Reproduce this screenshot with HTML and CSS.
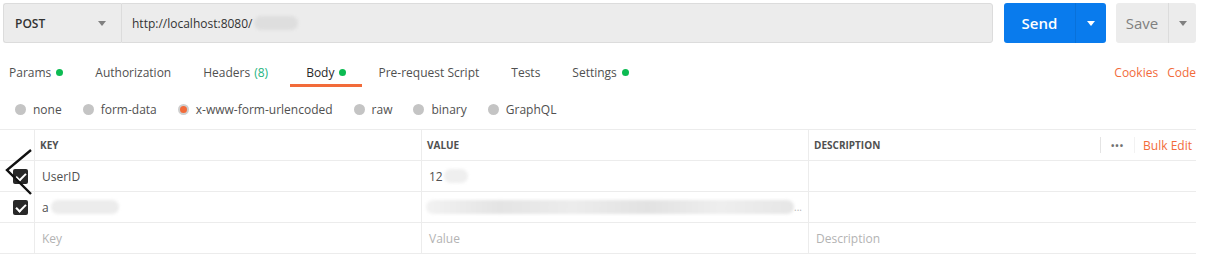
FILE: index.html
```html
<!DOCTYPE html>
<html lang="en">
<head>
    <meta charset="UTF-8">
    <title>Request - Body</title>
    <link rel="stylesheet" href="styles.css">
</head>
<body>
    <div class="page">
        <!-- request url bar -->
        <div class="url-bar">
            <div class="method">
                <span>POST</span>
                <span class="caret"></span>
            </div>
            <div class="url-input">
                <span>http://localhost:8080/</span><span class="smudge smudge-url"></span>
            </div>
            <div class="btn-send">
                <span class="btn-label">Send</span>
                <span class="btn-drop"><span class="caret caret-white"></span></span>
            </div>
            <div class="btn-save">
                <span class="btn-label">Save</span>
                <span class="btn-drop"><span class="caret"></span></span>
            </div>
        </div>

        <!-- tabs -->
        <div class="tabs">
            <div class="tab-list">
                <span class="tab">Params <i class="dot"></i></span>
                <span class="tab">Authorization</span>
                <span class="tab tab-headers">Headers <em>(8)</em></span>
                <span class="tab active">Body <i class="dot"></i></span>
                <span class="tab">Pre-request Script</span>
                <span class="tab">Tests</span>
                <span class="tab">Settings <i class="dot"></i></span>
            </div>
            <div class="tab-links">
                <span>Cookies</span>
                <span>Code</span>
            </div>
        </div>

        <!-- body type -->
        <div class="body-types">
            <label class="radio"><i></i>none</label>
            <label class="radio"><i></i>form-data</label>
            <label class="radio checked"><i></i>x-www-form-urlencoded</label>
            <label class="radio"><i></i>raw</label>
            <label class="radio"><i></i>binary</label>
            <label class="radio"><i></i>GraphQL</label>
        </div>

        <!-- key / value table -->
        <div class="kv-table">
            <div class="kv-row kv-head">
                <div class="cell cell-check"></div>
                <div class="cell">KEY</div>
                <div class="cell">VALUE</div>
                <div class="cell cell-desc">
                    <span>DESCRIPTION</span>
                    <span class="head-tools">
                        <span class="more">&bull;&bull;&bull;</span>
                        <span class="bulk">Bulk Edit</span>
                    </span>
                </div>
            </div>
            <div class="kv-row">
                <div class="cell cell-check"><span class="checkbox"></span></div>
                <div class="cell">UserID</div>
                <div class="cell">12<span class="smudge smudge-short"></span></div>
                <div class="cell"></div>
            </div>
            <div class="kv-row">
                <div class="cell cell-check"><span class="checkbox"></span></div>
                <div class="cell">a<span class="smudge smudge-key"></span></div>
                <div class="cell"><span class="smudge smudge-long"></span><span class="ellipsis">...</span></div>
                <div class="cell"></div>
            </div>
            <div class="kv-row">
                <div class="cell cell-check"></div>
                <div class="cell placeholder">Key</div>
                <div class="cell placeholder">Value</div>
                <div class="cell placeholder">Description</div>
            </div>
        </div>

        <!-- hand drawn mark over the first checkbox -->
        <svg class="scribble" width="32" height="50" viewBox="0 0 32 50">
            <path d="M27 2 L3 22 L27 46" fill="none" stroke="#111" stroke-width="2.4"/>
        </svg>
    </div>
</body>
</html>
```

FILE: styles.css
```css
body {
    margin: 0;
    font-family: 'Open Sans', 'Liberation Sans', Arial, sans-serif;
    font-size: 12px;
    color: #505050;
    background: #fff;
}
.page {
    position: relative;
    width: 1215px;
    height: 264px;
    overflow: hidden;
}

/* url bar */
.url-bar {
    display: flex;
    padding: 3px 0 0 3px;
    height: 40px;
}
.method {
    width: 118px;
    box-sizing: border-box;
    display: flex;
    align-items: center;
    justify-content: space-between;
    padding: 0 15px 0 11px;
    background: #ececec;
    border: 1px solid #dcdcdc;
    border-right: none;
    border-radius: 3px 0 0 3px;
    color: #333;
    font-weight: 600;
}
.caret {
    width: 0;
    height: 0;
    border-left: 4px solid transparent;
    border-right: 4px solid transparent;
    border-top: 5px solid #808080;
}
.caret-white {
    border-top-color: #fff;
}
.url-input {
    width: 872px;
    box-sizing: border-box;
    display: flex;
    align-items: center;
    padding-left: 10px;
    background: #ececec;
    border: 1px solid #dcdcdc;
    border-radius: 0 3px 3px 0;
    color: #333;
}
.btn-send, .btn-save {
    display: flex;
    border-radius: 3px;
    font-size: 15px;
    font-weight: 600;
}
.btn-send {
    margin-left: 11px;
    width: 102px;
    background: #097bed;
    color: #fff;
}
.btn-save {
    margin-left: 10px;
    width: 80px;
    background: #ececec;
    color: #808080;
    font-weight: 400;
}
.btn-label {
    flex: 1;
    display: flex;
    align-items: center;
    justify-content: center;
}
.btn-drop {
    width: 30px;
    display: flex;
    align-items: center;
    justify-content: center;
    border-left: 1px solid rgba(0,0,0,0.08);
}
.btn-save .btn-drop {
    width: 27px;
    border-left-color: #dcdcdc;
}

/* tabs */
.tabs {
    display: flex;
    justify-content: space-between;
    width: 1196px;
    overflow: hidden;
    margin-top: 17px;
    height: 27px;
}
.tab-list {
    display: flex;
}
.tab {
    display: flex;
    align-items: center;
    padding: 0 16px;
    height: 24px;
    border-bottom: 3px solid transparent;
    color: #505050;
    white-space: nowrap;
}
.tab:first-child {
    padding-left: 9px;
}
.tab em {
    font-style: normal;
    color: #26b47f;
    margin-left: 4px;
}
.tab-headers {
    padding-right: 22px;
}
.tab.active {
    color: #282828;
    border-bottom-color: #f26b3a;
}
.dot {
    width: 7px;
    height: 7px;
    border-radius: 50%;
    background: #0cbb52;
    margin-left: 5px;
}
.tab-links {
    display: flex;
    align-items: center;
    height: 24px;
    gap: 9px;
    margin-right: 0;
    color: #f26b3a;
    white-space: nowrap;
}

/* body type radios */
.body-types {
    display: flex;
    align-items: center;
    height: 22px;
    margin-top: 11px;
    padding-left: 15px;
}
.radio {
    display: flex;
    align-items: center;
    margin-right: 21px;
    color: #505050;
}
.radio i {
    width: 11px;
    height: 11px;
    border-radius: 50%;
    background: #c4c4c4;
    margin-right: 7px;
    box-sizing: border-box;
}
.radio.checked i {
    background: #f26b3a;
    border: 2px solid #cfcfcf;
}

/* table */
.kv-table {
    margin-top: 9px;
    width: 1196px;
    border-top: 1px solid #ececec;
}
.kv-row {
    display: grid;
    grid-template-columns: 34px 387px 387px 1fr;
    height: 31px;
    box-sizing: border-box;
    border-bottom: 1px solid #ececec;
}
.cell {
    display: flex;
    align-items: center;
    padding-left: 7px;
    border-left: 1px solid #ececec;
    overflow: hidden;
    white-space: nowrap;
}
.cell-check {
    border-left: none;
    padding-left: 13px;
}
.kv-head .cell {
    font-size: 10px;
    font-weight: 700;
    color: #505050;
    padding-left: 5px;
}
.kv-head .cell-check {
    padding-left: 0;
}
.cell-desc {
    justify-content: space-between;
}
.head-tools {
    display: flex;
    align-items: center;
    height: 100%;
}
.more {
    display: flex;
    align-items: center;
    height: 16px;
    padding: 0 10px;
    border-left: 1px solid #e4e4e4;
    border-right: 1px solid #f2f2f2;
    color: #707070;
    font-size: 9px;
    letter-spacing: 1px;
}
.bulk {
    padding: 0 4px 0 8px;
    font-size: 12px;
    font-weight: 400;
    color: #f26b3a;
    white-space: nowrap;
}
.checkbox {
    position: relative;
    width: 15px;
    height: 15px;
    border-radius: 2px;
    background: #282828;
}
.checkbox::after {
    content: "";
    position: absolute;
    left: 5px;
    top: 2px;
    width: 4px;
    height: 8px;
    border-right: 2px solid #fff;
    border-bottom: 2px solid #fff;
    transform: rotate(45deg);
}
.placeholder {
    color: #b3b3b3;
}
.ellipsis {
    margin-left: auto;
    margin-right: 6px;
    color: #b3b3b3;
    font-size: 10px;
}

/* redacted bits */
.smudge {
    display: inline-block;
    height: 14px;
    border-radius: 7px;
    background: #e2e2e2;
    filter: blur(1.5px);
}
.smudge-url {
    width: 44px;
    margin-left: 2px;
    background: #dedede;
}
.smudge-short {
    width: 24px;
    margin-left: 1px;
    background: #efefef;
}
.smudge-key {
    width: 68px;
    margin-left: 2px;
    background: #ececec;
}
.smudge-long {
    width: 370px;
    margin-left: -3px;
    background: linear-gradient(90deg, #f2f2f2, #e4e4e4 20%, #ececec 40%, #e2e2e2 60%, #eeeeee 80%, #e6e6e6);
}

.scribble {
    position: absolute;
    left: 4px;
    top: 148px;
}
```
